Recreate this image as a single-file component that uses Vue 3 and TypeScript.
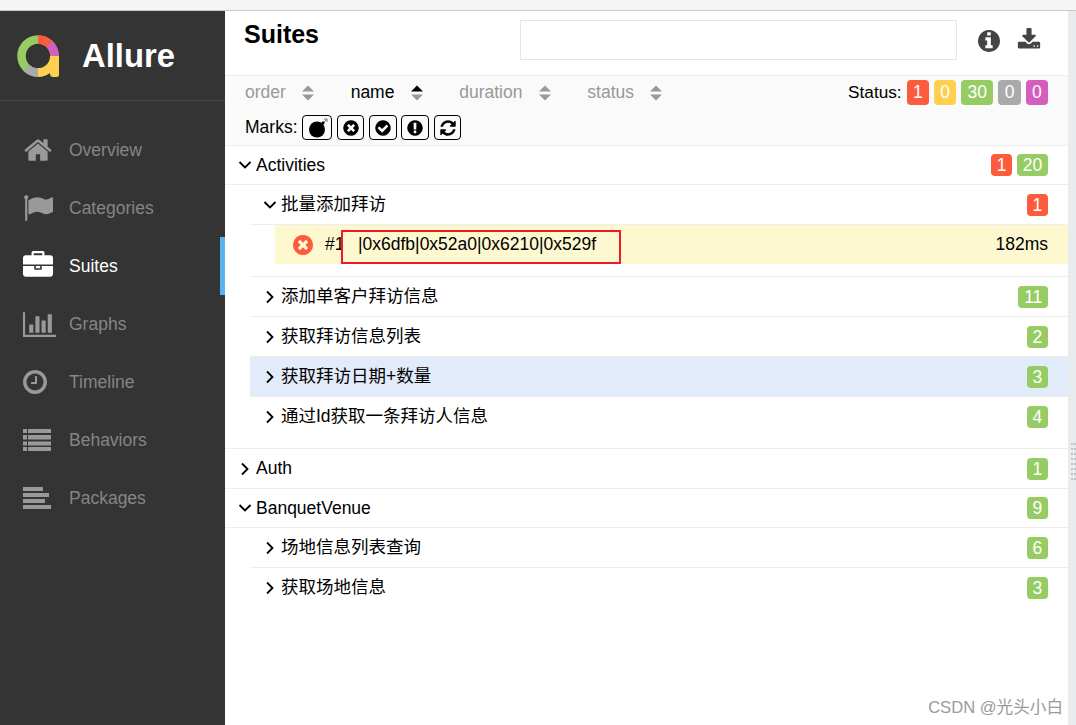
<script setup lang="ts">
interface Row { name: string; active?: boolean; passed?: number }

const P: Record<string, string> = {
  home: 'M1472 992v480q0 26-19 45t-45 19h-384v-384h-256v384h-384q-26 0-45-19t-19-45v-480q0-1 .5-3t.5-3l575-474 575 474q1 2 1 6zm223-69l-62 74q-8 9-21 11h-3q-13 0-21-7l-692-577-692 577q-12 8-24 7-13-2-21-11l-62-74q-8-10-7-23.500t11-21.500l719-599q32-26 76-26t76 26l244 204v-195q0-14 9-23t23-9h192q14 0 23 9t9 23v408l219 182q10 8 11 21.500t-7 23.500z',
  flag: 'M320 256q0 72-64 110v1266q0 13-9.500 22.500t-22.500 9.500h-64q-13 0-22.500-9.500t-9.500-22.500v-1266q-64-38-64-110 0-53 37.500-90.500t90.500-37.500 90.500 37.500 37.500 90.500zm1472 64v763q0 25-12.500 38.500t-39.500 27.500q-215 116-369 116-61 0-123.500-22t-108.500-48-115.500-48-142.500-22q-192 0-464 146-17 9-33 9-26 0-45-19t-19-45v-742q0-32 31-55 21-14 79-43 236-120 421-120 107 0 200 29t219 88q38 19 88 19 54 0 117.500-21t110-47 88-47 54.500-21q26 0 45 19t19 45z',
  briefcase: 'M640 256h512v-128h-512v128zm1152 640v480q0 66-47 113t-113 47h-1472q-66 0-113-47t-47-113v-480h672v160q0 26 19 45t45 19h320q26 0 45-19t19-45v-160h672zm-768 0v128h-256v-128h256zm768-480v384h-1792v-384q0-66 47-113t113-47h352v-160q0-40 28-68t68-28h576q40 0 68 28t28 68v160h352q66 0 113 47t47 113z',
  chart: 'M640 896v512h-256v-512h256zm384-512v1024h-256v-1024h256zm1024 1152v128h-2048v-1536h128v1408h1920zm-640-896v768h-256v-768h256zm384-384v1152h-256v-1152h256z',
  clock: 'M1024 544v448q0 14-9 23t-23 9h-320q-14 0-23-9t-9-23v-64q0-14 9-23t23-9h224v-352q0-14 9-23t23-9h64q14 0 23 9t9 23zm416 352q0-148-73-273t-198-198-273-73-273 73-198 198-73 273 73 273 198 198 273 73 273-73 198-198 73-273zm224 0q0 209-103 385.500t-279.500 279.500-385.500 103-385.500-103-279.500-279.500-103-385.500 103-385.500 279.500-279.500 385.500-103 385.500 103 279.500 279.500 103 385.500z',
  list: 'M0 0h4v4h-4zM5 0h23v4h-23zM0 6h4v4.500h-4zM5 6h23v4.500h-23zM0 12.500h4v4h-4zM5 12.500h23v4h-23zM0 18h4v4h-4zM5 18h23v4h-23z',
  packages: 'M0 0h20v4h-20zM0 6h26v4h-26zM0 12h22v4h-22zM0 18h28v4h-28z',
  info: 'M1152 1376v-160q0-14-9-23t-23-9h-96v-512q0-14-9-23t-23-9h-320q-14 0-23 9t-9 23v160q0 14 9 23t23 9h96v320h-96q-14 0-23 9t-9 23v160q0 14 9 23t23 9h448q14 0 23-9t9-23zm-128-896v-160q0-14-9-23t-23-9h-192q-14 0-23 9t-9 23v160q0 14 9 23t23 9h192q14 0 23-9t9-23zm640 416q0 209-103 385.500t-279.500 279.500-385.500 103-385.500-103-279.500-279.500-103-385.500 103-385.500 279.500-279.500 385.500-103 385.500 103 279.500 279.500 103 385.500z',
  download: 'M1344 1344q0-26-19-45t-45-19-45 19-19 45 19 45 45 19 45-19 19-45zm256 0q0-26-19-45t-45-19-45 19-19 45 19 45 45 19 45-19 19-45zm128-224v320q0 40-28 68t-68 28h-1472q-40 0-68-28t-28-68v-320q0-40 28-68t68-28h465l135 136q58 56 136 56t136-56l136-136h464q40 0 68 28t28 68zm-325-569q17 41-14 70l-448 448q-18 19-45 19t-45-19l-448-448q-31-29-14-70 17-39 59-39h256v-448q0-26 19-45t45-19h256q26 0 45 19t19 45v448h256q42 0 59 39z',
  times: 'M1277 1122q0-26-19-45l-181-181 181-181q19-19 19-45 0-27-19-46l-90-90q-19-19-46-19-26 0-45 19l-181 181-181-181q-19-19-45-19-27 0-46 19l-90 90q-19 19-19 46 0 26 19 45l181 181-181 181q-19 19-19 45 0 27 19 46l90 90q19 19 46 19 26 0 45-19l181-181 181 181q19 19 45 19 27 0 46-19l90-90q19-19 19-46zm387-226q0 209-103 385.500t-279.500 279.500-385.500 103-385.500-103-279.500-279.500-103-385.500 103-385.500 279.500-279.500 385.500-103 385.500 103 279.500 279.500 103 385.500z',
  check: 'M1412 734q0-28-18-46l-91-90q-19-19-45-19t-45 19l-408 407-226-226q-19-19-45-19t-45 19l-91 90q-18 18-18 46 0 27 18 45l362 362q19 19 45 19 27 0 46-19l543-543q18-18 18-45zm252 162q0 209-103 385.500t-279.500 279.500-385.500 103-385.500-103-279.500-279.500-103-385.500 103-385.500 279.500-279.500 385.500-103 385.500 103 279.500 279.500 103 385.500z',
  exclaim: 'M896 128q209 0 385.500 103t279.500 279.500 103 385.500-103 385.500-279.500 279.500-385.500 103-385.500-103-279.500-279.500-103-385.500 103-385.500 279.500-279.500 385.500-103zm128 1247v-190q0-14-9-23.500t-22-9.500h-192q-13 0-23 10t-10 23v190q0 13 10 23t23 10h192q13 0 22-9.500t9-23.500zm-2-344l18-621q0-12-10-18-10-8-24-8h-220q-14 0-24 8-10 6-10 18l17 621q0 10 10 17.500t24 7.500h185q14 0 23.500-7.500t10.500-17.500z',
  refresh: 'M1639 1056q0 5-1 7-64 268-268 434.500t-478 166.500q-146 0-282.500-55t-243.500-157l-129 129q-19 19-45 19t-45-19-19-45v-448q0-26 19-45t45-19h448q26 0 45 19t19 45-19 45l-137 137q71 66 161 102t187 36q134 0 250-65t186-179q11-17 53-117 8-23 30-23h192q13 0 22.500 9.500t9.500 22.500zm25-800v448q0 26-19 45t-45 19h-448q-26 0-45-19t-19-45 19-45l138-138q-148-137-349-137-134 0-250 65t-186 179q-11 17-53 117-8 23-30 23h-199q-13 0-22.500-9.500t-9.500-22.500v-7q65-268 270-434.500t480-166.500q146 0 284 55.500t245 156.500l130-129q19-19 45-19t45 19 19 45z',
}

const nav = [
  { label: 'Overview', icon: 'home', vb: '0 0 1792 1792', w: 30, h: 30 },
  { label: 'Categories', icon: 'flag', vb: '0 0 1792 1792', w: 30, h: 30 },
  { label: 'Suites', icon: 'briefcase', vb: '0 0 1792 1792', w: 30, h: 30, active: true },
  { label: 'Graphs', icon: 'chart', vb: '0 0 2048 1792', w: 33, h: 29 },
  { label: 'Timeline', icon: 'clock', vb: '128 128 1536 1536', w: 24, h: 24 },
  { label: 'Behaviors', icon: 'list', vb: '0 0 28 22', w: 28, h: 22 },
  { label: 'Packages', icon: 'packages', vb: '0 0 28 22', w: 28, h: 22 },
]

const sorters = [
  { label: 'order', up: false },
  { label: 'name', up: true, on: true },
  { label: 'duration', up: false },
  { label: 'status', up: false },
]

const statuses = [
  { n: 1, c: 'failed' }, { n: 0, c: 'broken' }, { n: 30, c: 'passed' }, { n: 0, c: 'skipped' }, { n: 0, c: 'unknown' },
]

const marks = ['times', 'check', 'exclaim', 'refresh']

const activities: Row[] = [
  { name: '添加单客户拜访信息', passed: 11 },
  { name: '获取拜访信息列表', passed: 2 },
  { name: '获取拜访日期+数量', passed: 3, active: true },
  { name: '通过Id获取一条拜访人信息', passed: 4 },
]
const venue: Row[] = [
  { name: '场地信息列表查询', passed: 6 },
  { name: '获取场地信息', passed: 3 },
]
</script>

<template>
  <div class="page">
    <div class="topstrip"></div>
    <div class="shell">
      <aside class="side">
        <div class="brand">
          <svg class="logo" width="42" height="42" viewBox="0 0 42 42">
            <circle cx="21" cy="21" r="16.500" fill="none" stroke="#97cc64" stroke-width="8.500" />
            <path d="M21 4.500A16.500 16.500 0 0 1 32.700 9.300" fill="none" stroke="#fd5a3e" stroke-width="8.500" />
            <path d="M32.700 9.300A16.500 16.500 0 0 1 37.500 21" fill="none" stroke="#d35ebe" stroke-width="8.500" />
            <path d="M9.300 32.700A16.500 16.500 0 0 0 21 37.500" fill="none" stroke="#aaa" stroke-width="8.500" />
            <path d="M37.500 21A16.500 16.500 0 0 1 21 37.500" fill="none" stroke="#ffd050" stroke-width="8.500" />
            <path d="M33 21h9v18.500a2.500 2.500 0 0 1-2.500 2.500h-3a3.500 3.500 0 0 1-3.500-3.500z" fill="#ffd050" />
          </svg>
          <span class="brand-name">Allure</span>
        </div>
        <nav class="nav">
          <div v-for="item in nav" :key="item.label" class="nav-item" :class="{ active: item.active }">
            <span class="nav-icon">
              <svg :width="item.w" :height="item.h" :viewBox="item.vb"><path :d="P[item.icon]" fill="currentColor" /></svg>
            </span>
            <span>{{ item.label }}</span>
          </div>
        </nav>
      </aside>

      <main class="main">
        <header class="head">
          <h1 class="title">Suites</h1>
          <div class="search"></div>
          <svg class="head-info" width="22" height="22" viewBox="128 128 1536 1536"><path :d="P.info" fill="#444" /></svg>
          <svg class="head-dl" width="24" height="24" viewBox="0 0 1792 1792"><path :d="P.download" fill="#444" /></svg>
        </header>

        <section class="bar">
          <div class="bar-line">
            <div class="sorters">
              <div v-for="s in sorters" :key="s.label" class="sorter" :class="{ on: s.on }">
                <span>{{ s.label }}</span>
                <svg width="12" height="16" viewBox="0 0 12 16">
                  <path d="M6 0.500L12 6.500H0z" :fill="s.up ? '#000' : '#999'" />
                  <path d="M0 9.500H12L6 15.500z" fill="#999" />
                </svg>
              </div>
            </div>
            <div class="status">
              <span class="status-label">Status:</span>
              <span v-for="(s, i) in statuses" :key="i" class="badge" :class="s.c">{{ s.n }}</span>
            </div>
          </div>
          <div class="marks">
            <span>Marks:</span>
            <span class="mark bomb">
              <svg width="23" height="20" viewBox="0 0 23 20">
                <circle cx="11" cy="11.500" r="8" fill="#000" />
                <path d="M16 6l2-2" stroke="#000" stroke-width="2.500" />
                <path d="M18 4l3-3M21 1h-3M21 1v3" stroke="#777" stroke-width="1" fill="none" />
              </svg>
            </span>
            <span v-for="m in marks" :key="m" class="mark">
              <svg width="18" height="18" viewBox="0 0 1792 1792"><path :d="P[m]" fill="#000" /></svg>
            </span>
          </div>
        </section>

        <section class="tree">
          <div class="row open">
            <svg class="chev" width="14" height="10" viewBox="0 0 14 10"><path d="M1.500 2L7 7.500 12.500 2" /></svg>
            <span class="name">Activities</span>
            <span class="badge failed">1</span>
            <span class="badge passed">20</span>
          </div>
          <div class="children">
            <div class="row sub">
              <svg class="chev" width="14" height="10" viewBox="0 0 14 10"><path d="M1.500 2L7 7.500 12.500 2" /></svg>
              <span class="name">批量添加拜访</span>
              <span class="badge failed">1</span>
            </div>
            <div class="test">
              <svg class="test-icon" width="20" height="20" viewBox="128 128 1536 1536"><path :d="P.times" fill="#fd5a3e" /></svg>
              <span class="test-id">#1</span>
              <span class="test-dur">182ms</span>
              <div class="callout">|0x6dfb|0x52a0|0x6210|0x529f</div>
            </div>
            <div class="row-list">
              <div v-for="r in activities" :key="r.name" class="row sub" :class="{ hl: r.active }">
                <svg class="chev closed" width="10" height="14" viewBox="0 0 10 14"><path d="M2 1.500L7.500 7 2 12.500" /></svg>
                <span class="name">{{ r.name }}</span>
                <span class="badge passed">{{ r.passed }}</span>
              </div>
            </div>
          </div>
          <div class="row ruled">
            <svg class="chev closed" width="10" height="14" viewBox="0 0 10 14"><path d="M2 1.500L7.500 7 2 12.500" /></svg>
            <span class="name">Auth</span>
            <span class="badge passed">1</span>
          </div>
          <div class="row open">
            <svg class="chev" width="14" height="10" viewBox="0 0 14 10"><path d="M1.500 2L7 7.500 12.500 2" /></svg>
            <span class="name">BanquetVenue</span>
            <span class="badge passed">9</span>
          </div>
          <div class="children tight">
            <div v-for="r in venue" :key="r.name" class="row sub">
              <svg class="chev closed" width="10" height="14" viewBox="0 0 10 14"><path d="M2 1.500L7.500 7 2 12.500" /></svg>
              <span class="name">{{ r.name }}</span>
              <span class="badge passed">{{ r.passed }}</span>
            </div>
          </div>
        </section>
      </main>

      <div class="gutter">
        <div class="grip">
          <i v-for="n in 16" :key="n"></i>
        </div>
      </div>
    </div>
    <div class="watermark">CSDN @光头小白</div>
  </div>
</template>

<style>
html, body { margin: 0; padding: 0; }
</style>

<style scoped>
.page {
  position: relative;
  width: 1076px;
  height: 725px;
  overflow: hidden;
  background: #fff;
  font-family: "Liberation Sans", "Noto Sans CJK SC", sans-serif;
  font-size: 17.5px;
  color: #000;
}
.topstrip {
  height: 10px;
  background: #f5f5f5;
  border-bottom: 1px solid #c8c8c8;
}
.shell {
  display: flex;
  height: 714px;
}
.side {
  width: 225px;
  flex: none;
  background: #343434;
}
.brand {
  display: flex;
  align-items: center;
  height: 89px;
  padding-left: 17px;
  border-bottom: 1px solid #4a4a4a;
}
.logo { flex: none; }
.brand-name {
  margin-left: 23px;
  font-size: 32.800px;
  font-weight: 700;
  color: #fff;
}
.nav { padding-top: 20px; }
.nav-item {
  display: flex;
  align-items: center;
  height: 58px;
  padding-left: 23px;
  color: #858585;
  box-sizing: border-box;
}
.nav-item.active {
  color: #fff;
  border-right: 5px solid #5ab1f0;
}
.nav-icon {
  display: flex;
  width: 46px;
  flex: none;
  align-items: center;
  color: #999;
}
.nav-item.active .nav-icon { color: #fff; }

.main {
  flex: 1;
  min-width: 0;
}
.head {
  display: flex;
  align-items: flex-start;
  height: 64px;
  border-bottom: 1px solid #ededed;
}
.title {
  margin: 8px 0 0 19px;
  width: 276px;
  font-size: 25px;
  font-weight: 700;
  line-height: 30px;
}
.search {
  width: 437px;
  height: 40px;
  margin-top: 9px;
  box-sizing: border-box;
  border: 1px solid #e5e5e5;
}
.head-info { margin: 19px 0 0 21px; }
.head-dl { margin: 17px 0 0 17px; }

.bar {
  height: 69px;
  background: #fafafa;
  border-bottom: 1px solid #ededed;
}
.bar-line {
  display: flex;
  justify-content: space-between;
  align-items: center;
  height: 33px;
  padding: 0 20px;
}
.sorters { display: flex; }
.sorter {
  display: flex;
  align-items: center;
  gap: 16.500px;
  margin-right: 36.300px;
  color: #999;
}
.sorter.on { color: #000; }
.status {
  display: flex;
  align-items: center;
  gap: 5px;
}
.status-label { font-size: 17.200px; }
.status .badge {
  height: 25px;
  padding: 0 6.300px;
  line-height: 25px;
}
.badge {
  display: inline-block;
  height: 22px;
  padding: 0 5.700px;
  border-radius: 4px;
  color: #fff;
  line-height: 22px;
  text-align: center;
  flex: none;
}
.failed { background: #fd5a3e; }
.broken { background: #ffd050; }
.passed { background: #97cc64; }
.skipped { background: #aaa; }
.unknown { background: #d35ebe; }

.marks {
  display: flex;
  align-items: center;
  height: 25px;
  margin: 6px 0 0 20px;
  gap: 4.700px;
}
.mark {
  display: flex;
  align-items: center;
  justify-content: center;
  width: 27.600px;
  height: 25px;
  box-sizing: border-box;
  border: 1px solid #000;
  border-radius: 4px;
}
.mark.bomb { width: 30px; }

.row {
  display: flex;
  align-items: center;
  height: 39px;
  padding-right: 20px;
  border-bottom: 1px solid #eee;
}
.row.open { height: 38px; }
.row.ruled { border-top: 1px solid #eee; }
.row .badge + .badge { margin-left: 5px; }
.row > .chev {
  flex: none;
  fill: none;
  stroke: #000;
  stroke-width: 1.800;
  margin-left: 13px;
  margin-right: 4px;
}
.row > .chev.closed {
  margin-left: 15px;
  margin-right: 6px;
}
.name {
  flex: 1;
  min-width: 0;
}
.row.sub .name { padding-bottom: 5px; }
.children {
  margin-left: 25px;
  padding-bottom: 12px;
}
.children.tight { padding-bottom: 0; }
.row.sub:last-child { border-bottom: 0; }
.row.hl { background: #e2ebfa; }
.row-list { border-top: 1px solid #eee; margin-top: 12px; }
.test {
  position: relative;
  display: flex;
  align-items: center;
  height: 39px;
  margin-left: 25px;
  padding: 0 20px 0 18px;
  background: #fdf8cf;
}
.test-icon { flex: none; }
.test-id { margin-left: 12px; flex: 1; }
.callout {
  position: absolute;
  left: 66px;
  top: 5px;
  width: 280px;
  height: 34px;
  box-sizing: border-box;
  padding-left: 15px;
  border: 2px solid #ed1c24;
  background: #fdf8cf;
  line-height: 25px;
}
.gutter {
  width: 8px;
  flex: none;
  background: #e9ecef;
  padding-top: 432px;
  box-sizing: border-box;
}
.grip {
  display: grid;
  grid-template-columns: 2px 2px;
  gap: 3px 1px;
  justify-content: center;
  margin-left: 2px;
}
.grip i {
  display: block;
  width: 2px;
  height: 2px;
  background: #c4c4c4;
}
.watermark {
  position: absolute;
  right: 13px;
  bottom: 7px;
  font-size: 16.600px;
  color: #9a9a9a;
}
</style>
